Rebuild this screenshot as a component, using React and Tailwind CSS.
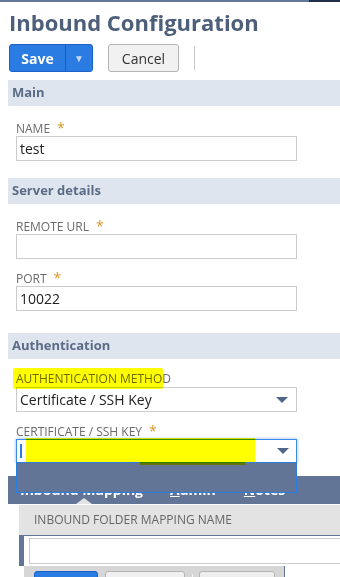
import React from 'react';

function SectionHeader({ title }) {
  return (
    <div className="ml-[8px] h-[26px] bg-[#dfe5ee] pl-[4px] flex items-center text-[13px] font-bold text-[#5b6c87]">
      {title}
    </div>
  );
}

function Label({ text, required }) {
  return (
    <div className="h-[17px] text-[12px] leading-[17px] text-[#6b6b6b] whitespace-nowrap">
      {text}
      {required && <span className="ml-[7px] text-[14px] text-[#d8972c]">*</span>}
    </div>
  );
}

function Input({ value }) {
  return (
    <div className="w-[281px] h-[25px] border border-[#cccccc] px-[3px] text-[14px] leading-[23px] text-[#222]">
      {value}
    </div>
  );
}

function Caret() {
  return <div className="w-0 h-0 border-l-[6px] border-r-[6px] border-t-[6px] border-l-transparent border-r-transparent border-t-[#50668a]" />;
}

export default function App() {
  return (
    <div className="relative w-[340px] h-[577px] overflow-hidden bg-white font-['Open_Sans',sans-serif]">
      <div className="flex h-[2px]">
        <div className="w-[309px] bg-[#607799]" />
        <div className="flex-1 bg-[#1f2f4c]" />
      </div>

      <h1 className="ml-[9px] mt-[4px] text-[22px] leading-[32px] font-bold text-[#4d5f7a] whitespace-nowrap">
        Inbound Configuration
      </h1>

      <div className="ml-[9px] mt-[6px] flex items-center h-[28px]">
        <div className="flex h-[28px] rounded-[3px] border border-[#1a62c8] bg-[#2a7ce2] overflow-hidden">
          <div className="w-[55px] flex items-center justify-center text-[14px] font-bold text-white">Save</div>
          <div className="w-[27px] border-l border-[#1a5fc0] flex items-center justify-center text-[10px] text-[#c4d6ef]">▼</div>
        </div>
        <div className="ml-[15px] w-[71px] h-[28px] rounded-[3px] border border-[#b4b4b4] bg-[#f1f1f1] flex items-center justify-center text-[14px] text-[#333]">
          Cancel
        </div>
        <div className="ml-[15px] w-px h-[24px] bg-[#c8c8c8]" />
      </div>

      <div className="mt-[8px]">
        <SectionHeader title="Main" />
      </div>
      <div className="ml-[16px] pt-[13px]">
        <Label text="NAME" required />
        <Input value="test" />
      </div>

      <div className="mt-[17px]">
        <SectionHeader title="Server details" />
      </div>
      <div className="ml-[16px] pt-[13px]">
        <Label text="REMOTE URL" required />
        <Input value="" />
        <div className="mt-[10px]">
          <Label text="PORT" required />
          <Input value="10022" />
        </div>
      </div>

      <div className="mt-[22px]">
        <SectionHeader title="Authentication" />
      </div>
      <div className="ml-[16px] pt-[11px]">
        <Label text="AUTHENTICATION METHOD" />
        <div className="w-[281px] h-[25px] border border-[#cccccc] pl-[3px] pr-[8px] flex items-center justify-between text-[14px] text-[#222]">
          <span>Certificate / SSH Key</span>
          <Caret />
        </div>
        <div className="mt-[10px]">
          <Label text="CERTIFICATE / SSH KEY" required />
          <div className="relative w-[281px] h-[24px] border border-[#3c8be6] shadow-[0_0_3px_#7fb2ee] pl-[3px] pr-[7px] flex items-center justify-between">
            <div className="w-[2px] h-[14px] bg-[#2a7de1]" />
            <Caret />
            <div className="absolute left-[-1px] right-[-1px] top-full h-[31px] bg-[#627597] border border-[#2a7de1] z-10" />
          </div>
        </div>
      </div>

      <div className="relative mt-[13px] ml-[8px] h-[28px] pb-[2px] bg-[#627597] flex items-center text-[14px] font-bold text-white whitespace-nowrap">
        <span className="ml-[12px]">Inbound Mapping</span>
        <span className="ml-[27px]"><span className="underline">A</span>dmin</span>
        <span className="ml-[28px]"><span className="underline">N</span>otes</span>
        <div className="absolute left-[68px] bottom-0 w-0 h-0 border-l-[8px] border-r-[8px] border-b-[6px] border-l-transparent border-r-transparent border-b-[#e3e3e3]" />
      </div>

      <div className="ml-[19px] mt-[1px]">
        <div className="h-[30px] bg-[#e3e3e3] pl-[15px] flex items-center text-[12px] text-[#666] whitespace-nowrap">
          INBOUND FOLDER MAPPING NAME
        </div>
        <div className="h-[31px] border-t border-l-[5px] border-[#627597] pl-[5px] pt-[2px]">
          <div className="w-[330px] h-[26px] border border-[#cccccc] bg-white" />
        </div>
        <div className="ml-[5px] w-[261px] h-[20px] bg-[#d6d6d6] border-r border-[#627597] flex items-start pt-[5px]">
          <div className="ml-[10px] w-[64px] h-[20px] rounded-[3px] bg-[#2a7ce2] border border-[#1a62c8]" />
          <div className="ml-[7px] w-[80px] h-[20px] rounded-[3px] bg-[#f0f0f0] border border-[#b4b4b4]" />
          <div className="ml-[7px] w-px h-[12px] mt-[3px] bg-[#f5f5f5]" />
          <div className="ml-[6px] w-[76px] h-[20px] rounded-[3px] bg-[#eeeeee] border border-[#b4b4b4]" />
        </div>
      </div>

      <div className="absolute left-[13px] top-[368px] w-[150px] h-[21px] bg-[#ffff00] mix-blend-multiply rounded-[2px]" />
      <div className="absolute left-[26px] top-[438px] w-[229px] h-[24px] bg-[#ffff00] mix-blend-multiply z-20" />
      <div className="absolute left-[140px] top-[461px] w-[105px] h-[4px] bg-[#ffff00] mix-blend-multiply z-20" />
    </div>
  );
}
